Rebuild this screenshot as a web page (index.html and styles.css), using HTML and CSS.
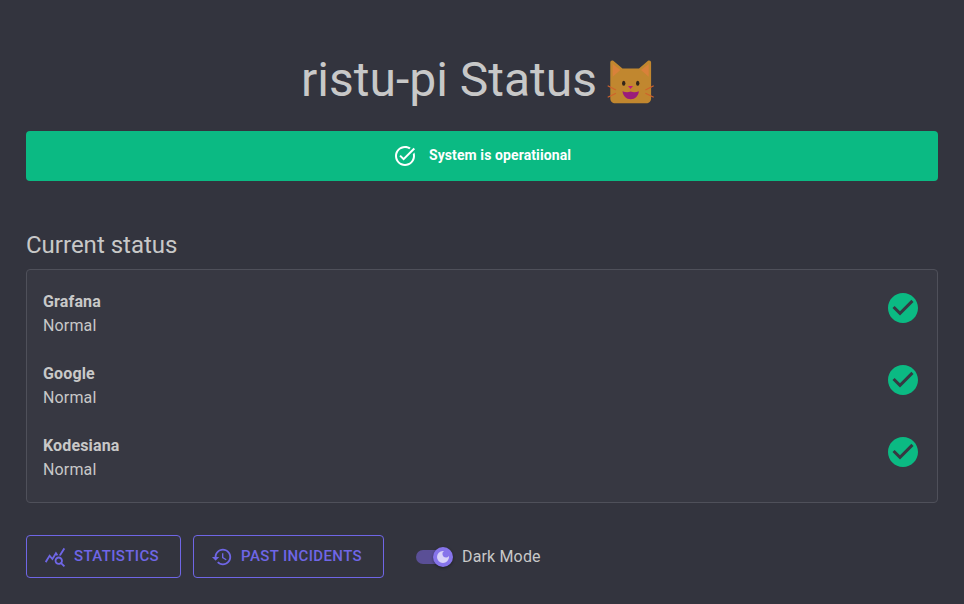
FILE: index.html
```html
<!DOCTYPE html>
<html lang="en">
<head>
  <meta charset="UTF-8" />
  <title>ristu-pi Status</title>
  <link rel="stylesheet" href="styles.css">
</head>
<body>
  <div class="page">
    <h1 class="title">
      <span>ristu-pi Status</span>
      <svg class="cat" viewBox="0 0 48 44" aria-hidden="true">
        <path class="cat-face" d="M3.300 2.500c0-1.800 1.700-2.700 3-1.700L15.500 8.500h16.500l9-7.700c1.300-1 3.100-.1 3.100 1.700v36c0 2.700-2.200 4.800-4.800 4.800H8.100c-2.700 0-4.800-2.100-4.800-4.800z"/>
        <path class="cat-ear" d="M5.700 4 13.300 10 5.700 16.700zM41.700 4 34 10l7.700 6.700z"/>
        <ellipse class="cat-eye" cx="16.700" cy="23.300" rx="1.700" ry="2.500"/>
        <ellipse class="cat-eye" cx="30.700" cy="23.300" rx="1.700" ry="2.500"/>
        <path class="cat-nose" d="M21 26h5l-2.500 3z"/>
        <path class="cat-mouth" d="M15.500 31.300c2.500 1 5.500 1.300 8.200.3 2.700 1 5.700 .7 8.200-.3-.5 4.500-3.700 8-8.200 8s-7.700-3.500-8.200-8z"/>
        <path class="cat-whisker" d="M.7 25.700 9 30M.7 37.300 9 33.300M46.700 25.700 38.400 30M46.700 37.300l-8.300-4"/>
      </svg>
    </h1>

    <div class="banner">
      <svg class="banner-icon" viewBox="0 0 24 24"><path d="M22 5.180 10.590 16.600l-4.240-4.240 1.410-1.410 2.830 2.830 10-10L22 5.180zm-2.210 5.040c.13.570.21 1.170.21 1.780 0 4.420-3.580 8-8 8s-8-3.580-8-8 3.580-8 8-8c1.580 0 3.040.46 4.280 1.250l1.440-1.440C16.100 2.670 14.130 2 12 2 6.480 2 2 6.480 2 12s4.480 10 10 10 10-4.480 10-10c0-1.190-.22-2.330-.6-3.390l-1.610 1.610z"/></svg>
      <span class="banner-text">System is operatiional</span>
    </div>

    <h2 class="section-title">Current status</h2>

    <div class="status-card">
      <div class="status-row">
        <div>
          <div class="status-name">Grafana</div>
          <div class="status-text">Normal</div>
        </div>
        <svg class="status-icon" viewBox="0 0 24 24"><path d="M12 2C6.480 2 2 6.480 2 12s4.480 10 10 10 10-4.480 10-10S17.520 2 12 2zm-2 15-5-5 1.410-1.410L10 14.170l7.590-7.590L19 8l-9 9z"/></svg>
      </div>
      <div class="status-row">
        <div>
          <div class="status-name">Google</div>
          <div class="status-text">Normal</div>
        </div>
        <svg class="status-icon" viewBox="0 0 24 24"><path d="M12 2C6.480 2 2 6.480 2 12s4.480 10 10 10 10-4.480 10-10S17.520 2 12 2zm-2 15-5-5 1.410-1.410L10 14.170l7.590-7.590L19 8l-9 9z"/></svg>
      </div>
      <div class="status-row">
        <div>
          <div class="status-name">Kodesiana</div>
          <div class="status-text">Normal</div>
        </div>
        <svg class="status-icon" viewBox="0 0 24 24"><path d="M12 2C6.480 2 2 6.480 2 12s4.480 10 10 10 10-4.480 10-10S17.520 2 12 2zm-2 15-5-5 1.410-1.410L10 14.170l7.590-7.590L19 8l-9 9z"/></svg>
      </div>
    </div>

    <div class="actions">
      <a class="btn" href="#">
        <svg class="btn-icon" viewBox="0 0 24 24"><path d="M19.880 18.470c.44-.7.7-1.510.7-2.390 0-2.490-2.010-4.500-4.500-4.500s-4.500 2.010-4.500 4.500 2.010 4.500 4.490 4.500c.88 0 1.700-.26 2.390-.7L21.580 23 23 21.580l-3.120-3.110zm-3.800.11c-1.380 0-2.500-1.120-2.500-2.500s1.120-2.500 2.500-2.500 2.500 1.120 2.500 2.500-1.120 2.500-2.500 2.500zm-.36-8.500c-.74.02-1.450.18-2.100.45l-.55-.83-3.800 6.180-3.010-3.520-3.630 5.810L1 17l5-8 3 3.500L13 6l2.720 4.080zm2.590.5c-.64-.28-1.330-.45-2.050-.49L21.380 2 23 3.180l-4.690 7.400z"/></svg>
        <span class="btn-text">Statistics</span>
      </a>
      <a class="btn" href="#">
        <svg class="btn-icon" viewBox="0 0 24 24"><path d="M13 3c-4.970 0-9 4.030-9 9H1l3.890 3.890.07.14L9 12H6c0-3.870 3.130-7 7-7s7 3.130 7 7-3.130 7-7 7c-1.930 0-3.680-.79-4.940-2.060l-1.420 1.420C8.270 19.990 10.510 21 13 21c4.970 0 9-4.030 9-9s-4.030-9-9-9zm-1 5v5l4.280 2.540.72-1.210-3.500-2.080V8H12z"/></svg>
        <span class="btn-text">Past Incidents</span>
      </a>
      <label class="toggle">
        <span class="toggle-track">
          <span class="toggle-thumb">
            <svg viewBox="0 0 24 24"><path d="M12 3a9 9 0 1 0 9 9c0-.46-.04-.92-.1-1.360a5.390 5.390 0 0 1-4.400 2.260 5.400 5.400 0 0 1-3.140-9.800c-.44-.06-.9-.1-1.360-.1z"/></svg>
          </span>
        </span>
        Dark Mode
      </label>
    </div>
  </div>
</body>
</html>
```

FILE: styles.css
```css
* {
  box-sizing: border-box;
}

body {
  margin: 0;
  background: #33343e;
  color: #c8c8c8;
  font-family: Roboto, sans-serif;
}

.page {
  padding: 50px 26px 0;
}

.title {
  display: flex;
  justify-content: center;
  align-items: center;
  gap: 10px;
  margin: 0;
  padding-right: 8px;
  height: 60px;
  font-size: 48px;
  font-weight: 400;
  line-height: 60px;
}

.cat {
  width: 48px;
  height: 44px;
  margin-top: 4px;
}

.cat-face { fill: #c1872f; }
.cat-ear { fill: #d9813a; }
.cat-eye { fill: #33261a; }
.cat-nose { fill: #c0177e; }
.cat-mouth { fill: #9b1c7b; }
.cat-whisker {
  fill: none;
  stroke: #d0622c;
  stroke-width: 1.100;
}

.banner {
  display: flex;
  justify-content: center;
  align-items: center;
  gap: 12px;
  height: 50px;
  margin-top: 21px;
  background: #0bba83;
  border-radius: 4px;
  color: #fff;
  font-size: 14px;
  font-weight: 700;
  letter-spacing: 0.1px;
}

.banner-text {
  padding-bottom: 2px;
}

.banner-icon {
  width: 24px;
  height: 24px;
  fill: #fff;
}

.section-title {
  margin: 50px 0 10px;
  font-size: 24px;
  font-weight: 400;
  line-height: 28px;
}

.status-card {
  display: flex;
  flex-direction: column;
  gap: 24px;
  padding: 20px 16px;
  background: #373842;
  border: 1px solid #4f505a;
  border-radius: 4px;
}

.status-row {
  display: flex;
  justify-content: space-between;
}

.status-name {
  font-size: 16px;
  font-weight: 700;
  line-height: 24px;
  letter-spacing: 0.15px;
}

.status-text {
  font-size: 16px;
  line-height: 24px;
  letter-spacing: 0.15px;
}

.status-icon {
  width: 36px;
  height: 36px;
  fill: #0bba83;
}

.actions {
  display: flex;
  align-items: center;
  gap: 12px;
  margin-top: 32px;
}

.btn {
  display: flex;
  align-items: center;
  gap: 8px;
  height: 43px;
  padding: 0 21px 0 17px;
  border: 1px solid #6f66e6;
  border-radius: 4px;
  color: #6f66e6;
  font-size: 15px;
  font-weight: 500;
  letter-spacing: 0.375px;
  text-decoration: none;
  text-transform: uppercase;
}

.btn-text {
  padding-bottom: 2px;
}

.btn-icon {
  width: 22px;
  height: 22px;
  fill: currentColor;
}

.toggle {
  display: flex;
  align-items: center;
  gap: 12px;
  margin-left: 20px;
  font-size: 16px;
  letter-spacing: 0.15px;
}

.toggle-track {
  position: relative;
  width: 34px;
  height: 14px;
  background: #5a4f96;
  border-radius: 7px;
}

.toggle-thumb {
  position: absolute;
  top: -3px;
  right: -3px;
  display: flex;
  align-items: center;
  justify-content: center;
  width: 20px;
  height: 20px;
  background: #8674ea;
  border-radius: 50%;
  box-shadow: 0 1px 3px rgba(0, 0, 0, 0.4);
}

.toggle-thumb svg {
  width: 16px;
  height: 16px;
  fill: #d8d2f8;
}
```
